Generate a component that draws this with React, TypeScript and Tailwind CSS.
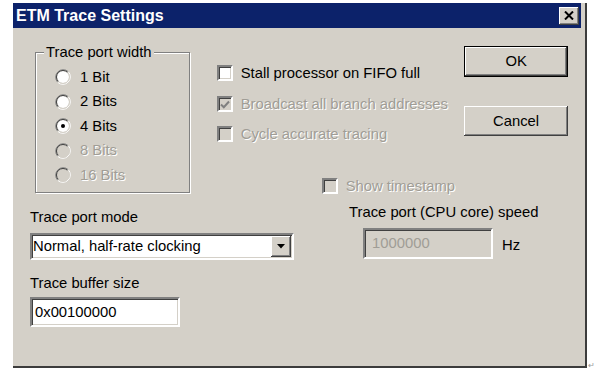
const sunken =
  "border-2 border-t-[#808080] border-l-[#808080] border-b-white border-r-white shadow-[inset_1px_1px_0_#404040,inset_-1px_-1px_0_#d4d0c8]";
const raised =
  "bg-[#d4d0c8] shadow-[inset_-1px_-1px_0_#404040,inset_1px_1px_0_#fff,inset_-2px_-2px_0_#808080,inset_2px_2px_0_#d4d0c8]";
const disabledText = "text-[#a09d96] [text-shadow:1px_1px_0_#fff]";

function Radio({ checked, disabled }: { checked?: boolean; disabled?: boolean }) {
  return (
    <svg width="16" height="16" viewBox="0 0 16 16" className="shrink-0">
      <circle cx="8" cy="8" r="6" fill={disabled ? "#d4d0c8" : "#fff"} />
      <path d="M2.7 13.3A7.5 7.5 0 0 1 13.3 2.7" fill="none" stroke="#808080" />
      <path d="M13.3 2.7A7.5 7.5 0 0 1 2.7 13.3" fill="none" stroke="#fff" />
      <path d="M3.4 12.6A6.5 6.5 0 0 1 12.6 3.4" fill="none" stroke="#404040" />
      <path d="M12.6 3.4A6.5 6.5 0 0 1 3.4 12.6" fill="none" stroke="#d4d0c8" />
      {checked && <circle cx="8" cy="8" r="2" fill={disabled ? "#808080" : "#000"} />}
    </svg>
  );
}

function Check({ checked, disabled }: { checked?: boolean; disabled?: boolean }) {
  return (
    <div
      className={`w-[16px] h-[16px] shrink-0 flex items-center justify-center ${sunken} ${
        disabled ? "bg-[#d4d0c8]" : "bg-white"
      }`}
    >
      {checked && (
        <svg width="10" height="9" viewBox="0 0 10 9">
          <path
            d="M1 4.5 L3.8 7.2 L9 1.5"
            fill="none"
            stroke={disabled ? "#808080" : "#000"}
            strokeWidth="2"
          />
        </svg>
      )}
    </div>
  );
}

const widths = [
  { label: "1 Bit" },
  { label: "2 Bits" },
  { label: "4 Bits", checked: true },
  { label: "8 Bits", disabled: true },
  { label: "16 Bits", disabled: true },
];

export default function App() {
  return (
    <div className="relative w-[600px] h-[377px] bg-white pl-[13px] pt-[3px] font-['Liberation_Sans',Arial,sans-serif] text-[14.8px] text-black overflow-hidden">
      <div className="w-[574px] h-[365px] bg-[#d4d0c8] border-r-2 border-b-2 border-[#3c3c3c] flex flex-col">
        {/* title bar */}
        <div className="h-[25px] mr-[4px] bg-[#0c226a] flex items-center justify-between pl-[3px] pr-[2px]">
          <span className="text-white font-bold text-[16px] leading-none">ETM Trace Settings</span>
          <div className={`w-[20px] h-[18px] flex items-center justify-center ${raised}`}>
            <svg width="10" height="9" viewBox="0 0 10 9">
              <path d="M1 0.5 L9 8.5 M9 0.5 L1 8.5" stroke="#000" strokeWidth="2" />
            </svg>
          </div>
        </div>

        <div className="flex-1 px-[17px] pt-[18px]">
          {/* top row */}
          <div className="flex items-start">
            <div className="relative ml-[5px] mt-[6px] w-[155px] h-[141px] border border-[#808080] shadow-[inset_1px_1px_0_#fff,1px_1px_0_#fff] pt-[11.75px] pl-[19px]">
              <span className="absolute -top-[9px] left-[8px] px-[2px] bg-[#d4d0c8] leading-[16px]">
                Trace port width
              </span>
              {widths.map((w) => (
                <div key={w.label} className="h-[24.5px] flex items-center gap-[9px]">
                  <Radio checked={w.checked} disabled={w.disabled} />
                  <span className={w.disabled ? disabledText : ""}>{w.label}</span>
                </div>
              ))}
            </div>

            <div className="ml-[27px] w-[248px] mt-[17px]">
              <div className="h-[20px] flex items-center gap-[8px]">
                <Check />
                <span>Stall processor on FIFO full</span>
              </div>
              <div className="mt-[11px] h-[20px] flex items-center gap-[8px]">
                <Check checked disabled />
                <span className={disabledText}>Broadcast all branch addresses</span>
              </div>
              <div className="mt-[10px] h-[20px] flex items-center gap-[8px]">
                <Check disabled />
                <span className={disabledText}>Cycle accurate tracing</span>
              </div>
              <div className="mt-[32px] ml-[105px] h-[20px] flex items-center gap-[8px]">
                <Check disabled />
                <span className={disabledText}>Show timestamp</span>
              </div>
            </div>

            <div className="w-[104px] flex flex-col">
              <button className={`h-[31px] border border-black flex items-center justify-center ${raised}`}>
                OK
              </button>
              <button className={`mt-[29px] h-[30px] flex items-center justify-center ${raised}`}>
                Cancel
              </button>
            </div>
          </div>

          {/* bottom row */}
          <div className="flex items-start">
            <div className="w-[264px]">
              <div className="mt-[12.5px] h-[17px] leading-[17px]">Trace port mode</div>
              <div className={`mt-[7.5px] h-[27px] bg-white flex items-center ${sunken}`}>
                <span className="flex-1 pl-[1px]">Normal, half-rate clocking</span>
                <div className={`w-[20px] h-[21px] mr-[1px] flex items-center justify-center ${raised}`}>
                  <svg width="8" height="5" viewBox="0 0 8 5">
                    <path d="M0 0 H8 L4 4.5 Z" fill="#000" />
                  </svg>
                </div>
              </div>
              <div className="mt-[14.5px] h-[17px] leading-[17px]">Trace buffer size</div>
              <div className={`mt-[5.5px] w-[150px] h-[30px] bg-white flex items-center pl-[3px] ${sunken}`}>
                0x00100000
              </div>
            </div>

            <div className="ml-[55px]">
              <div className="mt-[7.5px] h-[17px] leading-[17px] whitespace-nowrap">Trace port (CPU core) speed</div>
              <div className="mt-[7.5px] flex items-center">
                <div className={`ml-[14px] w-[130px] h-[31px] bg-[#d4d0c8] flex items-center pl-[7px] text-[#a09d96] ${sunken}`}>
                  1000000
                </div>
                <span className="ml-[9px] mt-[4px]">Hz</span>
              </div>
            </div>
          </div>
        </div>
      </div>
      <span className="absolute left-[588px] top-[362px] text-[8px] text-[#999] leading-none">↵</span>
    </div>
  );
}
